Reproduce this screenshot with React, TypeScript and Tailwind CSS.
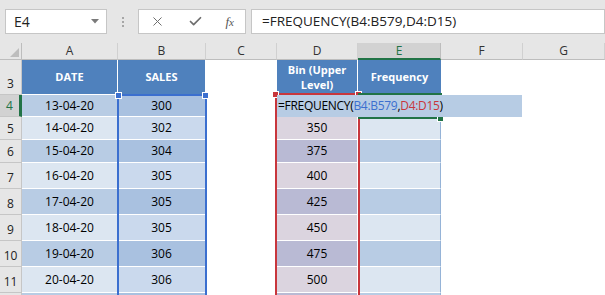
import { X, Check } from "lucide-react";

const rows = [
  { n: 4, a: "13-04-20", b: "300", d: "" },
  { n: 5, a: "14-04-20", b: "302", d: "350" },
  { n: 6, a: "15-04-20", b: "304", d: "375" },
  { n: 7, a: "16-04-20", b: "305", d: "400" },
  { n: 8, a: "17-04-20", b: "305", d: "425" },
  { n: 9, a: "18-04-20", b: "305", d: "450" },
  { n: 10, a: "19-04-20", b: "306", d: "475" },
  { n: 11, a: "20-04-20", b: "306", d: "500" },
  { n: 12, a: "", b: "", d: "" },
];

const cols = ["A", "B", "C", "D", "E", "F", "G"];

const font = { fontFamily: '"Open Sans", "Noto Sans", sans-serif' };

const Handle = ({ className }: { className: string }) => (
  <div className={`absolute w-[7px] h-[7px] border border-white ${className}`} />
);

const App = () => {
  return (
    <div className="w-[605px] h-[295px] overflow-hidden bg-white text-black" style={font}>
      {/* formula bar */}
      <div className="h-[43px] bg-[#e6e6e6] flex items-start pt-[9px] pl-[5px]">
        <div className="w-[102px] h-[25px] bg-white border border-[#c6c6c6] flex items-center justify-between pl-[8px] pr-[7px]">
          <span className="text-[14px] text-[#222]">E4</span>
          <svg width="8" height="5" viewBox="0 0 8 5">
            <path d="M0 0 L8 0 L4 4.5 Z" fill="#7a7a7a" />
          </svg>
        </div>
        <div className="w-[31px] h-[25px] flex flex-col items-center justify-center gap-[2px]">
          <div className="w-[2px] h-[2px] bg-[#a6a6a6]" />
          <div className="w-[2px] h-[2px] bg-[#a6a6a6]" />
          <div className="w-[2px] h-[2px] bg-[#a6a6a6]" />
        </div>
        <div className="w-[108px] h-[25px] bg-white border border-[#c6c6c6] flex items-center justify-between pl-[11px] pr-[11px]">
          <X size={15} strokeWidth={1.6} color="#6e6e6e" />
          <Check size={15} strokeWidth={2.8} color="#6e6e6e" />
          <span className="text-[13px] italic text-[#555]" style={{ fontFamily: '"Liberation Serif", serif' }}>
            f<span className="text-[11px]">x</span>
          </span>
        </div>
        <div className="ml-[5px] flex-1 h-[25px] bg-white border border-[#c6c6c6] flex items-center pl-[10px]">
          <span className="text-[13.5px] text-[#222]">=FREQUENCY(B4:B579,D4:D15)</span>
        </div>
      </div>

      {/* sheet */}
      <div className="relative">
        <div className="grid grid-cols-[22px_96px_88px_71px_81px_83px_82px_1fr] grid-rows-[17px_35px_22px_23px_23px_26px_26px_26px_26px_26px_26px_26px]">
          {/* column headers */}
          <div className="bg-[#e6e6e6] border-r border-b border-[#bdbdbd] relative">
            <svg className="absolute right-[2px] bottom-[2px]" width="9" height="9" viewBox="0 0 9 9">
              <path d="M9 0 L9 9 L0 9 Z" fill="#bdbdbd" />
            </svg>
          </div>
          {cols.map((c) =>
            c === "E" ? (
              <div
                key={c}
                className="bg-[#d2d2d2] border-r border-[#bdbdbd] border-b-2 border-b-[#217346] flex items-center justify-center text-[12px] text-[#217346]"
              >
                {c}
              </div>
            ) : (
              <div
                key={c}
                className="bg-[#e6e6e6] border-r border-b border-[#d0d0d0] border-b-[#bdbdbd] flex items-center justify-center text-[12px] text-[#333]"
              >
                {c}
              </div>
            )
          )}

          {/* row 3 */}
          <div className="bg-[#e6e6e6] border-r border-b border-[#c6c6c6] flex items-end justify-center pb-[1px] text-[12px] text-[#222]">
            3
          </div>
          <div className="bg-[#4f81bd] border-r border-b border-white flex items-center justify-center text-[11px] font-bold text-white">
            DATE
          </div>
          <div className="bg-[#4f81bd] border-r border-b border-white flex items-center justify-center text-[11px] font-bold text-white">
            SALES
          </div>
          <div className="bg-white" />
          <div className="bg-[#4f81bd] border-r border-b border-white flex items-center justify-center text-center text-[11px] leading-[15px] font-bold text-white">
            Bin (Upper
            <br />
            Level)
          </div>
          <div className="bg-[#4f81bd] border-b border-white flex items-center justify-center text-[11px] font-bold text-white">
            Frequency
          </div>
          <div className="bg-white" />
          <div className="bg-white" />

          {/* data rows */}
          {rows.map((r) => {
            const dark = r.n % 2 === 0;
            return [
              <div
                key={`h${r.n}`}
                className={
                  r.n === 4
                    ? "bg-[#d2d2d2] border-r-[3px] border-r-[#217346] border-b border-b-[#c6c6c6] flex items-end justify-center pb-[1px] text-[12px] text-[#217346]"
                    : "bg-[#e6e6e6] border-r border-b border-[#c6c6c6] flex items-end justify-center pb-[1px] text-[12px] text-[#222]"
                }
              >
                {r.n < 12 ? r.n : ""}
              </div>,
              <div
                key={`a${r.n}`}
                className={`${dark ? "bg-[#b8cce4]" : "bg-[#dce6f1]"} border-r border-b border-white flex items-center justify-center text-[12px]`}
              >
                {r.a}
              </div>,
              <div
                key={`b${r.n}`}
                className={`${dark ? "bg-[#a9c1e0]" : "bg-[#cad9ed]"} border-r border-b border-white flex items-center justify-center text-[12px]`}
              >
                {r.b}
              </div>,
              <div key={`c${r.n}`} className="bg-white" />,
              <div
                key={`d${r.n}`}
                className={`${dark ? "bg-[#b9bad4]" : "bg-[#dbd4df]"} border-r border-b border-white flex items-center justify-center text-[12px]`}
              >
                {r.d}
              </div>,
              <div
                key={`e${r.n}`}
                className={`${dark ? "bg-[#b8cce4]" : "bg-[#dce6f1]"} border-r border-r-[#95b3d7] border-b border-b-white`}
              />,
              <div key={`f${r.n}`} className="bg-white" />,
              <div key={`g${r.n}`} className="bg-white" />,
            ];
          })}
        </div>

        {/* reference range B4:B579 */}
        <div className="absolute left-[117px] top-[51px] w-[90px] h-[300px] border-2 border-[#3b6fcf]" />
        <Handle className="left-[115px] top-[49px] bg-[#3b6fcf]" />
        <Handle className="left-[202px] top-[49px] bg-[#3b6fcf]" />

        {/* reference range D4:D15 */}
        <div className="absolute left-[275px] top-[50px] w-[85px] h-[300px] border-2 border-[#c8363c]" />
        <Handle className="left-[272px] top-[48px] bg-[#c8363c]" />
        <Handle className="left-[355px] top-[48px] bg-[#c8363c]" />

        {/* active cell E4 */}
        <div className="absolute left-[358px] top-[50px] w-[84px] h-[26px] border-2 border-[#217346]" />
        <Handle className="left-[437px] top-[72px] bg-[#217346]" />

        {/* in-cell editor */}
        <div className="absolute left-[277px] top-[52px] w-[245px] h-[22px] bg-[#b7cce4] flex items-center pl-[1px] text-[12px] tracking-[-0.3px] whitespace-nowrap">
          <span>=FREQUENCY(</span>
          <span className="text-[#3b6fcf]">B4:B579</span>
          <span>,</span>
          <span className="text-[#c8363c]">D4:D15</span>
          <span>)</span>
        </div>
      </div>
    </div>
  );
};

export default App;
